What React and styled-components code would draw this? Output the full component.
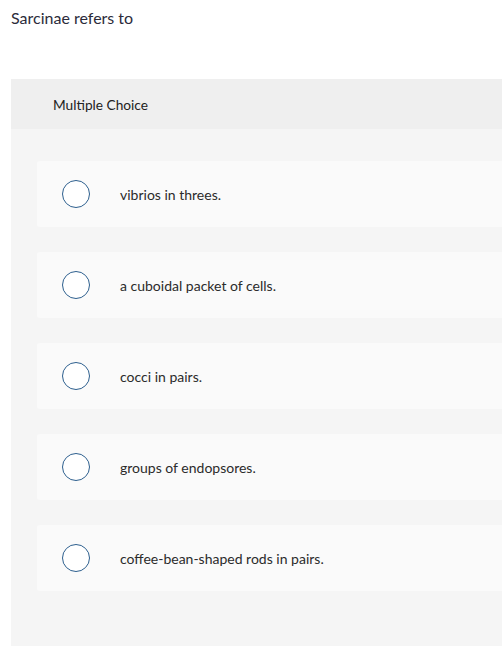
import styled, { createGlobalStyle } from 'styled-components';
import React from 'react';

const Global = createGlobalStyle`
  body {
    margin: 0;
    background: #fff;
    font-family: Lato, "Open Sans", sans-serif;
    overflow: hidden;
  }
`;

const Page = styled.div`
  width: 502px;
  height: 656px;
  padding-left: 11px;
  box-sizing: border-box;
`;

const Question = styled.p`
  margin: 0;
  padding-top: 8px;
  height: 79px;
  box-sizing: border-box;
  font-size: 16px;
  color: #2b2b3a;
`;

const Panel = styled.div`
  width: 500px;
  height: 567px;
  background: #f5f5f5;
  display: flex;
  flex-direction: column;
`;

const Header = styled.div`
  height: 50px;
  background: #efefef;
  display: flex;
  align-items: center;
  padding-left: 42px;
  font-size: 13.7px;
  color: #222;
`;

const Options = styled.div`
  display: flex;
  flex-direction: column;
  gap: 25px;
  padding: 32px 0 0 26px;
`;

const Option = styled.label`
  height: 66px;
  background: #fafafa;
  border-radius: 3px 0 0 3px;
  display: flex;
  align-items: center;
  padding-left: 25px;
  font-size: 14px;
  color: #2b2b2b;
  cursor: pointer;
`;

const Radio = styled.span`
  width: 28px;
  height: 28px;
  box-sizing: border-box;
  border-radius: 50%;
  border: 1.5px solid #2d5f8e;
  background: #fff;
  margin-right: 30px;
  flex-shrink: 0;
`;

const choices = [
  'vibrios in threes.',
  'a cuboidal packet of cells.',
  'cocci in pairs.',
  'groups of endopsores.',
  'coffee-bean-shaped rods in pairs.',
];

function App() {
  return (
    <Page>
      <Global />
      <Question>Sarcinae refers to</Question>
      <Panel>
        <Header>Multiple Choice</Header>
        <Options>
          {choices.map((c) => (
            <Option key={c}>
              <Radio />
              {c}
            </Option>
          ))}
        </Options>
      </Panel>
    </Page>
  );
}

export default App;
